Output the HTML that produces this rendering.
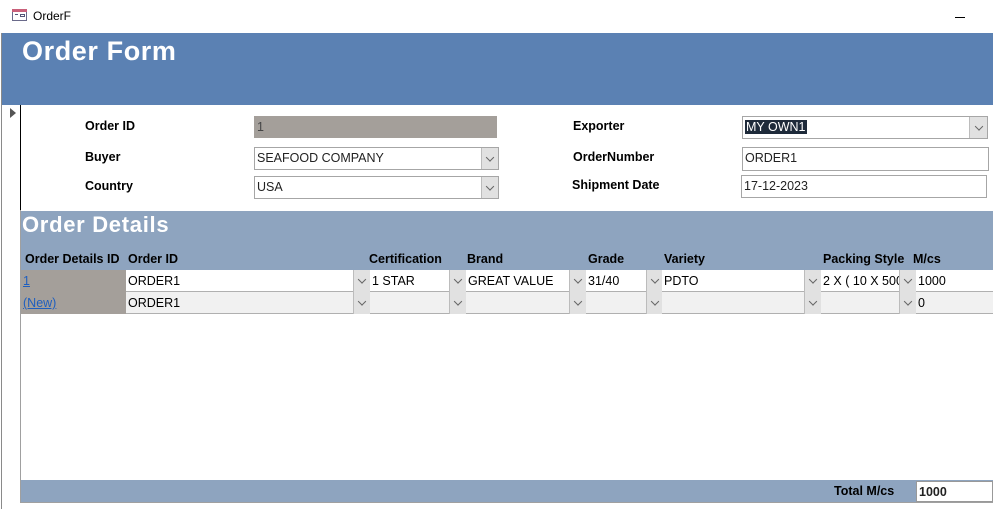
<!DOCTYPE html>
<html><head><style>
*{margin:0;padding:0;box-sizing:border-box}
body{width:993px;height:509px;overflow:hidden;background:#fff;position:relative;font-family:"Liberation Sans",sans-serif;font-size:12.5px;color:#000}
.a{position:absolute}
.lbl{position:absolute;font-weight:bold;font-size:12.5px;margin-top:1px}
.box{position:absolute;border:1px solid #a6a6a6;background:#fff;padding-left:2px;line-height:21px;font-size:12.5px;color:#222;white-space:nowrap;overflow:hidden}
.btn{position:absolute;background:#e1e1e1;border-left:1px solid #bcbcbc}
.btn::after{content:"";position:absolute;left:50%;top:50%;width:5px;height:5px;border-right:1px solid #666;border-bottom:1px solid #666;transform:translate(-50%,-75%) rotate(45deg)}
.cell{position:absolute;height:22px;line-height:22px;padding-left:2px;white-space:nowrap;overflow:hidden;font-size:12.5px;border-bottom:1px solid #b0b0b0}
.hd{position:absolute;top:252px;font-weight:bold;font-size:12.5px}
</style></head><body>
<div class="a" style="left:0;top:0;width:993px;height:33px;background:#fff"></div>
<div class="a" style="left:12px;top:9px;width:15px;height:12px;border:1px solid #6a6a8a;background:#fff"></div>
<div class="a" style="left:12px;top:9px;width:15px;height:3px;background:#c9607a"></div>
<div class="a" style="left:15px;top:14px;width:3px;height:1px;background:#557"></div>
<div class="a" style="left:20px;top:14px;width:5px;height:3px;border:1px solid #557"></div>
<div class="a" style="left:33px;top:9px;font-size:12px">OrderF</div>
<div class="a" style="left:955px;top:17px;width:10px;height:1px;background:#000"></div>
<div class="a" style="left:1px;top:33px;width:1px;height:476px;background:#8a8a8a"></div>
<div class="a" style="left:2px;top:33px;width:991px;height:72px;background:#5b81b3"></div>
<div class="a" style="left:22px;top:36px;color:#fff;font-weight:bold;font-size:27px;letter-spacing:0.6px">Order Form</div>
<div class="a" style="left:10px;top:108px;width:0;height:0;border-left:6px solid #555;border-top:5px solid transparent;border-bottom:5px solid transparent"></div>
<div class="a" style="left:20px;top:105px;width:1px;height:105px;background:#000"></div>

<div class="lbl" style="left:85px;top:118px">Order ID</div>
<div class="lbl" style="left:85px;top:149px">Buyer</div>
<div class="lbl" style="left:85px;top:178px">Country</div>
<div class="box" style="left:254px;top:116px;width:243px;height:22px;background:#a49f9a;border-color:#a49f9a;color:#444">1</div>
<div class="box" style="left:254px;top:147px;width:245px;height:23px">SEAFOOD COMPANY</div>
<div class="btn" style="left:481px;top:148px;width:17px;height:21px"></div>
<div class="box" style="left:254px;top:176px;width:245px;height:23px">USA</div>
<div class="btn" style="left:481px;top:177px;width:17px;height:21px"></div>

<div class="lbl" style="left:573px;top:118px">Exporter</div>
<div class="lbl" style="left:573px;top:149px">OrderNumber</div>
<div class="lbl" style="left:572px;top:177px">Shipment Date</div>
<div class="box" style="left:742px;top:116px;width:246px;height:23px"><span style="background:#1e2a3a;color:#fff;padding:0 1px">MY OWN1</span></div>
<div class="btn" style="left:969px;top:117px;width:18px;height:21px"></div>
<div class="box" style="left:742px;top:147px;width:247px;height:24px">ORDER1</div>
<div class="box" style="left:741px;top:175px;width:246px;height:23px">17-12-2023</div>

<div class="a" style="left:20px;top:210px;width:973px;height:293px;border-left:1px solid #a0a0a0;border-bottom:1px solid #a0a0a0;background:#fff"></div>
<div class="a" style="left:21px;top:211px;width:972px;height:59px;background:#8ea4bf"></div>
<div class="a" style="left:22px;top:212px;color:#fff;font-weight:bold;font-size:22px;letter-spacing:0.7px">Order Details</div>
<div class="hd" style="left:25px">Order Details ID</div>
<div class="hd" style="left:128px">Order ID</div>
<div class="hd" style="left:369px">Certification</div>
<div class="hd" style="left:467px">Brand</div>
<div class="hd" style="left:588px">Grade</div>
<div class="hd" style="left:664px">Variety</div>
<div class="hd" style="left:823px">Packing Style</div>
<div class="hd" style="left:913px">M/cs</div>

<div class="cell" style="left:21px;top:270px;width:105px;background:#a49f9a;border:none;height:44px"></div>
<div class="a" style="left:23px;top:274px;color:#1f5fbf;text-decoration:underline">1</div>
<div class="a" style="left:23px;top:296px;color:#1f5fbf;text-decoration:underline">(New)</div>
<div class="cell" style="left:126px;top:270px;width:244px;background:#fff">ORDER1</div>
<div class="cell" style="left:370px;top:270px;width:96px;background:#fff">1 STAR</div>
<div class="cell" style="left:466px;top:270px;width:120px;background:#fff">GREAT VALUE</div>
<div class="cell" style="left:586px;top:270px;width:76px;background:#fff">31/40</div>
<div class="cell" style="left:662px;top:270px;width:159px;background:#fff">PDTO</div>
<div class="cell" style="left:821px;top:270px;width:95px;background:#fff">2 X ( 10 X 500</div>
<div class="cell" style="left:916px;top:270px;width:77px;background:#fff">1000</div>
<div class="cell" style="left:126px;top:292px;width:244px;background:#f1f1f1">ORDER1</div>
<div class="cell" style="left:370px;top:292px;width:96px;background:#f1f1f1"></div>
<div class="cell" style="left:466px;top:292px;width:120px;background:#f1f1f1"></div>
<div class="cell" style="left:586px;top:292px;width:76px;background:#f1f1f1"></div>
<div class="cell" style="left:662px;top:292px;width:159px;background:#f1f1f1"></div>
<div class="cell" style="left:821px;top:292px;width:95px;background:#f1f1f1"></div>
<div class="cell" style="left:916px;top:292px;width:77px;background:#f1f1f1">0</div>
<div class="btn" style="left:353px;top:270px;width:17px;height:22px"></div>
<div class="btn" style="left:449px;top:270px;width:17px;height:22px"></div>
<div class="btn" style="left:569px;top:270px;width:17px;height:22px"></div>
<div class="btn" style="left:646px;top:270px;width:16px;height:22px"></div>
<div class="btn" style="left:804px;top:270px;width:17px;height:22px"></div>
<div class="btn" style="left:899px;top:270px;width:17px;height:22px"></div>
<div class="btn" style="left:353px;top:292px;width:17px;height:22px"></div>
<div class="btn" style="left:449px;top:292px;width:17px;height:22px"></div>
<div class="btn" style="left:569px;top:292px;width:17px;height:22px"></div>
<div class="btn" style="left:646px;top:292px;width:16px;height:22px"></div>
<div class="btn" style="left:804px;top:292px;width:17px;height:22px"></div>
<div class="btn" style="left:899px;top:292px;width:17px;height:22px"></div>

<div class="a" style="left:21px;top:480px;width:972px;height:22px;background:#8ea4bf"></div>
<div class="lbl" style="left:834px;top:483px">Total M/cs</div>
<div class="box" style="left:916px;top:481px;width:77px;height:21px;font-weight:bold;border-color:#999">1000</div>
</body></html>
